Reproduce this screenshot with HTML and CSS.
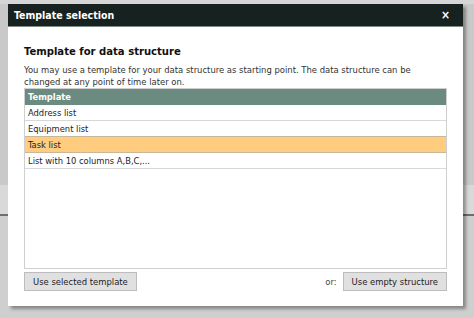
FILE: index.html
```html
<!DOCTYPE html>
<html>
<head>
<meta charset="utf-8">
<link rel="stylesheet" href="styles.css">
</head>
<body>
<div class="dialog">
  <div class="titlebar">
    <span class="title">Template selection</span>
    <span class="close">×</span>
  </div>
  <div class="content">
    <h2 class="heading">Template for data structure</h2>
    <p class="desc">You may use a template for your data structure as starting point. The data structure can be changed at any point of time later on.</p>
    <div class="list">
      <div class="list-head">Template</div>
      <div class="row">Address list</div>
      <div class="row">Equipment list</div>
      <div class="row selected">Task list</div>
      <div class="row">List with 10 columns A,B,C,...</div>
    </div>
    <div class="actions">
      <button class="btn">Use selected template</button>
      <div class="right">
        <span class="or">or:</span>
        <button class="btn">Use empty structure</button>
      </div>
    </div>
  </div>
</div>
</body>
</html>
```

FILE: styles.css
```css
html, body {
  margin: 0;
  padding: 0;
}
body {
  width: 474px;
  height: 318px;
  overflow: hidden;
  font-family: "DejaVu Sans Condensed", "DejaVu Sans", sans-serif;
  background:
    linear-gradient(to bottom, #d6d6d6 0, #d6d6d6 4px, #c9c9c9 4px, #c9c9c9 185px, #d9d9d9 185px, #d9d9d9 214px, #6d6d6d 214px, #6d6d6d 216px, #cfcfcf 216px);
  padding: 4px 11px 0 8px;
  box-sizing: border-box;
}
.dialog {
  width: 455px;
  height: 302px;
  background: #fff;
  box-shadow: 3px 3px 3px rgba(0,0,0,0.35);
  display: flex;
  flex-direction: column;
}
.titlebar {
  height: 22px;
  background: #17211f;
  border-bottom: 1px solid #7c8a86;
  display: flex;
  align-items: center;
  justify-content: space-between;
  padding: 0 13px 0 6px;
  color: #fff;
}
.title {
  font-weight: bold;
  font-size: 10.5px;
}
.close {
  font-size: 12px;
  font-weight: bold;
}
.content {
  padding: 17px 16px 0 16px;
  display: flex;
  flex-direction: column;
}
.heading {
  margin: 0;
  font-size: 11.2px;
  font-weight: bold;
  color: #111;
  line-height: 16px;
}
.desc {
  margin: 4px 0 0 0;
  padding-right: 6px;
  font-size: 9.4px;
  line-height: 12px;
  color: #333;
}
.list {
  margin-top: 0;
  height: 179px;
  border: 1px solid #cfcfcf;
  font-size: 9.3px;
  color: #222;
}
.list-head {
  height: 16px;
  line-height: 16px;
  background: #6b8a80;
  color: #fff;
  font-weight: bold;
  padding-left: 3px;
}
.row {
  height: 15px;
  line-height: 15px;
  padding-left: 3px;
  border-bottom: 1px solid #d8d8d8;
}
.row.selected {
  background: #ffcc80;
  border-top: 1px solid #c9b79a;
  border-bottom: 1px solid #c9b79a;
  margin-top: -1px;
}
.actions {
  margin-top: 3px;
  display: flex;
  justify-content: space-between;
  align-items: center;
}
.right {
  display: flex;
  align-items: center;
  gap: 6px;
}
.or {
  font-size: 9.4px;
  color: #444;
}
.btn {
  font-family: "DejaVu Sans Condensed", "DejaVu Sans", sans-serif;
  font-size: 9.4px;
  color: #222;
  background: #e0e0e0;
  border: 1px solid #bdbdbd;
  height: 19px;
  padding: 0 8px;
  margin: 0;
}
```
